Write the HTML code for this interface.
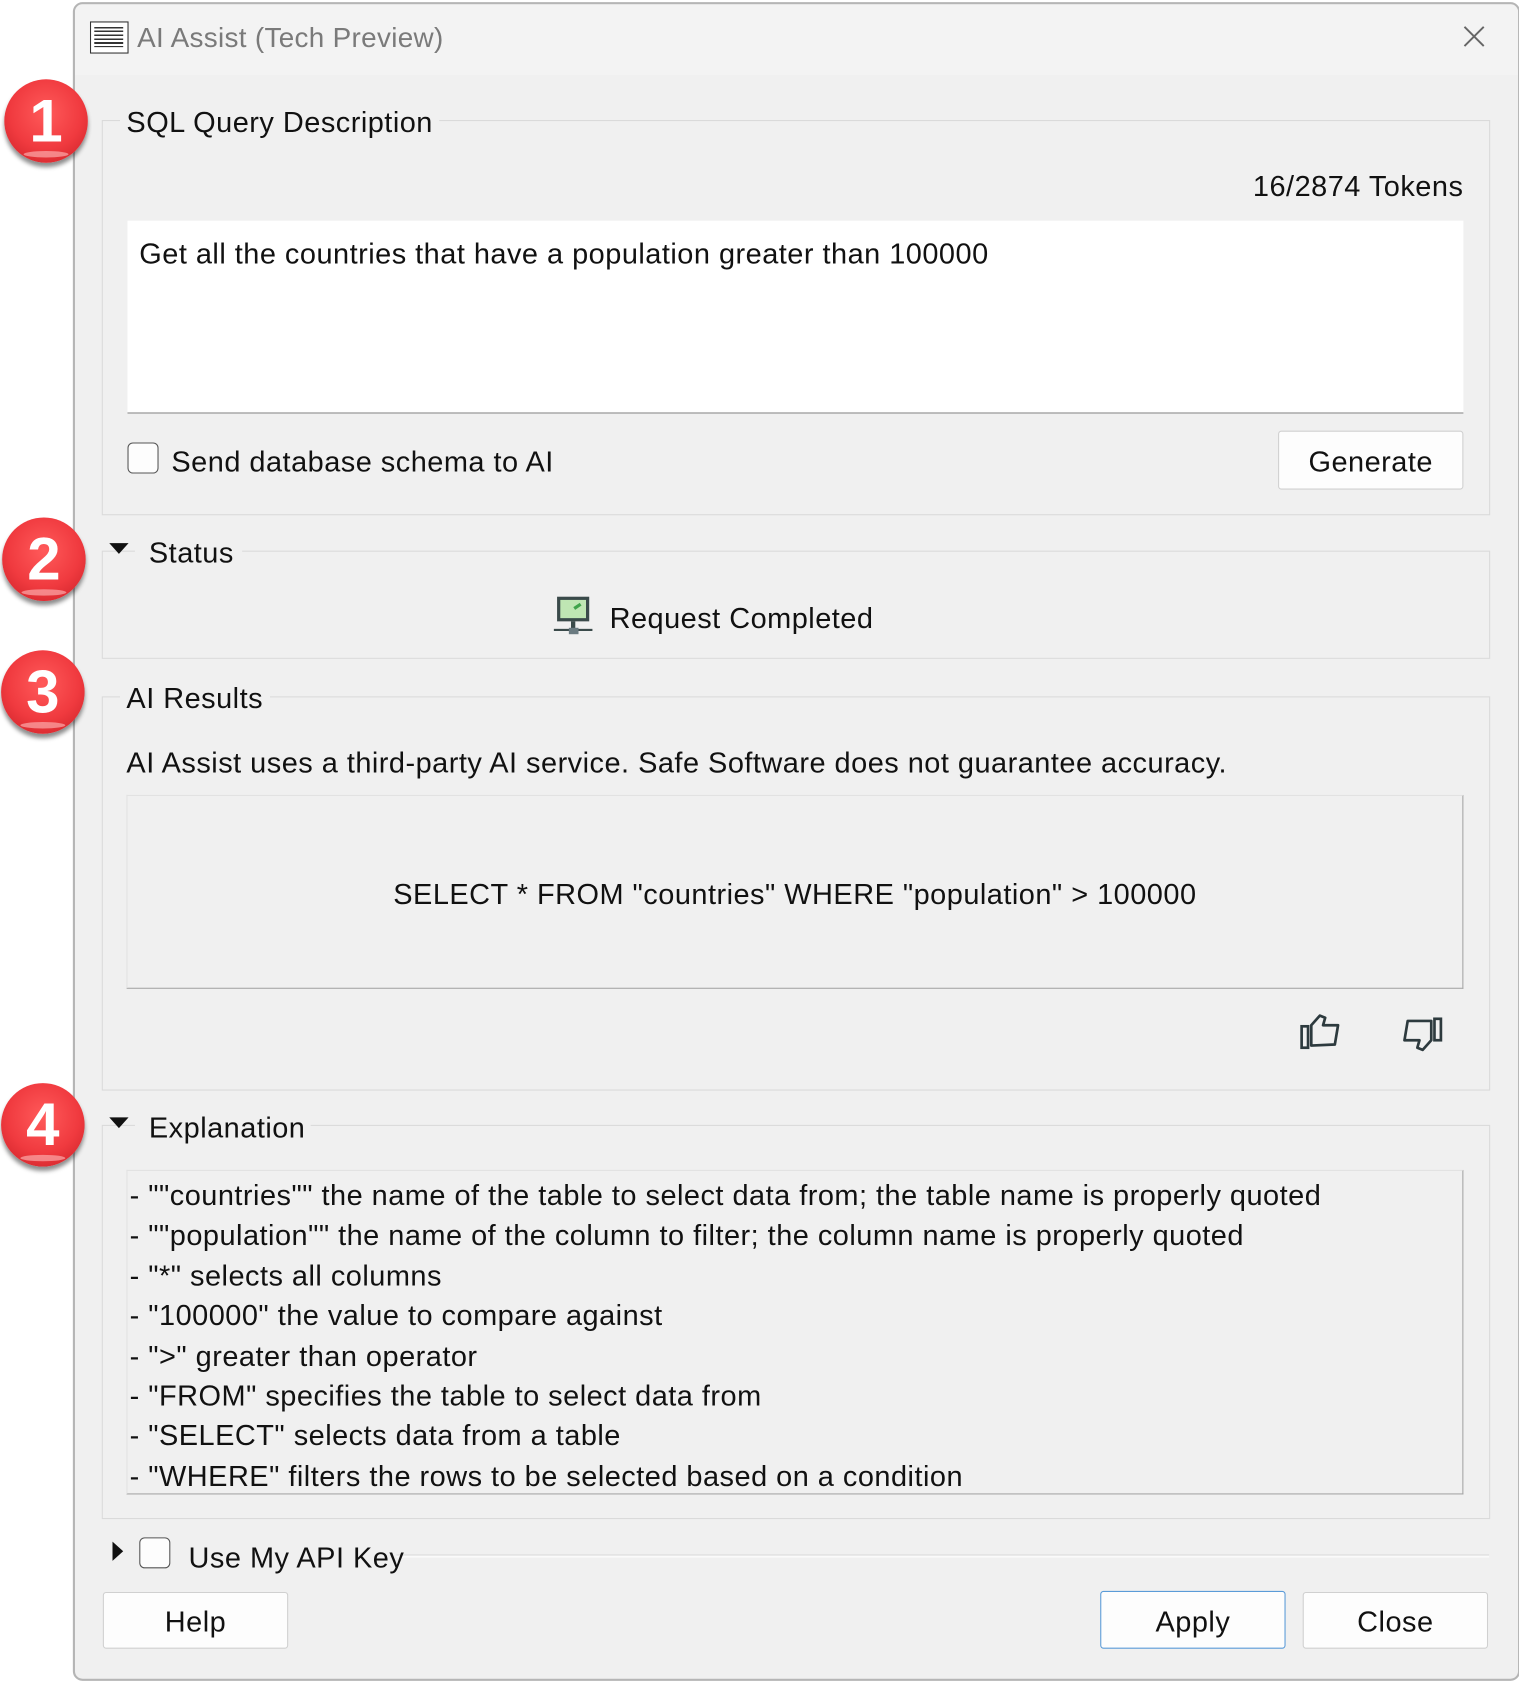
<!DOCTYPE html>
<html><head><meta charset="utf-8"><style>
html,body{margin:0;padding:0;background:#fff;}
body{width:1519px;height:1680px;overflow:hidden;position:relative;}
#w{position:absolute;left:0;top:0;width:1418px;height:1568px;transform:scale(1.0713);transform-origin:0 0;font-family:"Liberation Sans",sans-serif;color:#111;}
.a{position:absolute;}
.t{position:absolute;font-size:27px;letter-spacing:0.45px;line-height:30px;white-space:nowrap;}
.dlg{left:68px;top:2px;width:1347px;height:1563px;border:2px solid #b5b5b5;border-radius:9px;background:#f0f0f0;overflow:hidden;}
.frame{position:absolute;border:1px solid #dadada;}
.lbl{position:absolute;background:#f0f0f0;padding:0 6px;font-size:27px;letter-spacing:0.45px;line-height:30px;white-space:nowrap;}
.btn{position:absolute;background:#fdfdfd;border:1px solid #d0d0d0;border-radius:3px;font-size:27px;letter-spacing:0.45px;text-align:center;}
.cb{position:absolute;width:27px;height:27px;border:1.5px solid #555;border-radius:5px;background:#fdfdfd;}
.badge{position:absolute;width:78px;height:78px;border-radius:50%;background:radial-gradient(circle at 50% 40%,#ff5a5a 0%,#f03a3f 55%,#c81f26 100%);box-shadow:0 4px 4px rgba(0,0,0,.45);color:#fff;font-weight:bold;font-size:56px;line-height:78px;text-align:center;}
.badge:after{content:"";position:absolute;left:18px;right:18px;bottom:5px;height:6px;border-radius:50%;background:rgba(255,190,190,.6);}
.tri{position:absolute;width:0;height:0;border-left:9px solid transparent;border-right:9px solid transparent;border-top:10px solid #111;}
</style></head><body><div id="w">
<div class="a dlg">
  <div class="a" style="left:0;top:0;width:100%;height:66px;background:#f3f3f3;"></div>
</div>
<div class="a" style="left:84px;top:20px;width:34px;height:28px;border:1.5px solid #333;background:#fff;"></div>
<div class="a" style="left:88px;top:25px;width:27px;height:19px;background:repeating-linear-gradient(#333 0 1.5px,transparent 1.5px 3.6px);"></div>
<div class="t" style="left:128px;top:20px;color:#7a7a7a;font-size:26px;letter-spacing:0.3px;">AI Assist (Tech Preview)</div>
<svg class="a" style="left:1365px;top:23px" width="22" height="22"><path d="M2 2L20 20M20 2L2 20" stroke="#666" stroke-width="1.8"/></svg>

<div class="frame" style="left:95px;top:112px;width:1294px;height:367px;"></div>
<div class="lbl" style="left:112px;top:99px;">SQL Query Description</div>
<div class="t" style="left:1000px;top:159px;width:366px;text-align:right;">16/2874 Tokens</div>
<div class="a" style="left:119px;top:206px;width:1247px;height:179px;background:#fff;border-bottom:1.5px solid #888;"></div>
<div class="t" style="left:130px;top:222px;">Get all the countries that have a population greater than 100000</div>
<div class="cb" style="left:119px;top:413px;"></div>
<div class="t" style="left:160px;top:416px;">Send database schema to AI</div>
<div class="btn" style="left:1193px;top:402px;width:171px;height:53px;line-height:56px;">Generate</div>

<div class="frame" style="left:95px;top:514px;width:1294px;height:99px;"></div>
<div class="a" style="left:126px;top:500px;width:100px;height:30px;background:#f0f0f0;"></div>
<div class="tri" style="left:102px;top:507px;"></div>
<div class="t" style="left:139px;top:501px;">Status</div>
<svg class="a" style="left:516px;top:556px" width="40" height="38" viewBox="0 0 40 38">
<rect x="4" y="1" width="30" height="23" fill="#3a4a4a"/><rect x="7" y="4" width="24" height="17" fill="#bfe6b3"/>
<path d="M20 12l6-4" stroke="#3fa34a" stroke-width="3"/>
<rect x="17" y="24" width="4" height="8" fill="#3a4a4a"/><rect x="1" y="31" width="36" height="2" fill="#3a4a4a"/><rect x="15" y="30" width="9" height="6" fill="#6a7a80"/></svg>
<div class="t" style="left:569px;top:562px;">Request Completed</div>

<div class="frame" style="left:95px;top:650px;width:1294px;height:366px;"></div>
<div class="lbl" style="left:112px;top:637px;">AI Results</div>
<div class="t" style="left:118px;top:697px;">AI Assist uses a third-party AI service. Safe Software does not guarantee accuracy.</div>
<div class="a" style="left:118px;top:742px;width:1246px;height:179px;border:1px solid #a5a5a5;border-top-color:#e2e2e2;border-left-color:#e2e2e2;"></div>
<div class="t" style="left:118px;top:820px;width:1248px;text-align:center;">SELECT * FROM "countries" WHERE "population" &gt; 100000</div>
<svg class="a" style="left:1212px;top:944px" width="44" height="40" viewBox="0 0 44 40"><rect x="3" y="14" width="6" height="20" fill="none" stroke="#2d3a3e" stroke-width="2.5"/><path d="M12 32V13L20 4L25 6L23 13H37L34 31Z" fill="none" stroke="#2d3a3e" stroke-width="2.5" stroke-linejoin="round"/></svg>
<svg class="a" style="left:1306px;top:946px" width="44" height="40" viewBox="0 0 44 40"><rect x="33" y="5" width="6" height="20" fill="none" stroke="#2d3a3e" stroke-width="2.5"/><path d="M30 7V25L22 34L17 32L19 25H5L8 7Z" fill="none" stroke="#2d3a3e" stroke-width="2.5" stroke-linejoin="round"/></svg>

<div class="frame" style="left:95px;top:1050px;width:1294px;height:366px;"></div>
<div class="a" style="left:126px;top:1036px;width:164px;height:30px;background:#f0f0f0;"></div>
<div class="tri" style="left:102px;top:1043px;"></div>
<div class="t" style="left:139px;top:1038px;">Explanation</div>
<div class="a" style="left:118px;top:1092px;width:1246px;height:301px;border:1px solid #a5a5a5;border-top-color:#e2e2e2;border-left-color:#e2e2e2;"></div>
<div class="t" style="left:121px;top:1098px;line-height:37.4px;">- ""countries"" the name of the table to select data from; the table name is properly quoted<br>- ""population"" the name of the column to filter; the column name is properly quoted<br>- "*" selects all columns<br>- "100000" the value to compare against<br>- "&gt;" greater than operator<br>- "FROM" specifies the table to select data from<br>- "SELECT" selects data from a table<br>- "WHERE" filters the rows to be selected based on a condition</div>

<div class="a" style="left:370px;top:1451px;width:1020px;height:2px;background:#fafafa;border-top:1px solid #dadada;"></div>
<div class="a" style="left:105px;top:1439px;width:0;height:0;border-top:9px solid transparent;border-bottom:9px solid transparent;border-left:10px solid #111;"></div>
<div class="cb" style="left:130px;top:1435px;"></div>
<div class="t" style="left:176px;top:1439px;">Use My API Key</div>

<div class="btn" style="left:96px;top:1486px;width:171px;height:51px;line-height:55px;">Help</div>
<div class="btn" style="left:1027px;top:1485px;width:171px;height:52px;line-height:56px;border:1.5px solid #5b9bd8;">Apply</div>
<div class="btn" style="left:1216px;top:1486px;width:171px;height:51px;line-height:55px;">Close</div>

<div class="badge" style="left:4px;top:74px;">1</div>
<div class="badge" style="left:2px;top:483px;">2</div>
<div class="badge" style="left:1px;top:607px;">3</div>
<div class="badge" style="left:1px;top:1011px;">4</div>
</div></body></html>
